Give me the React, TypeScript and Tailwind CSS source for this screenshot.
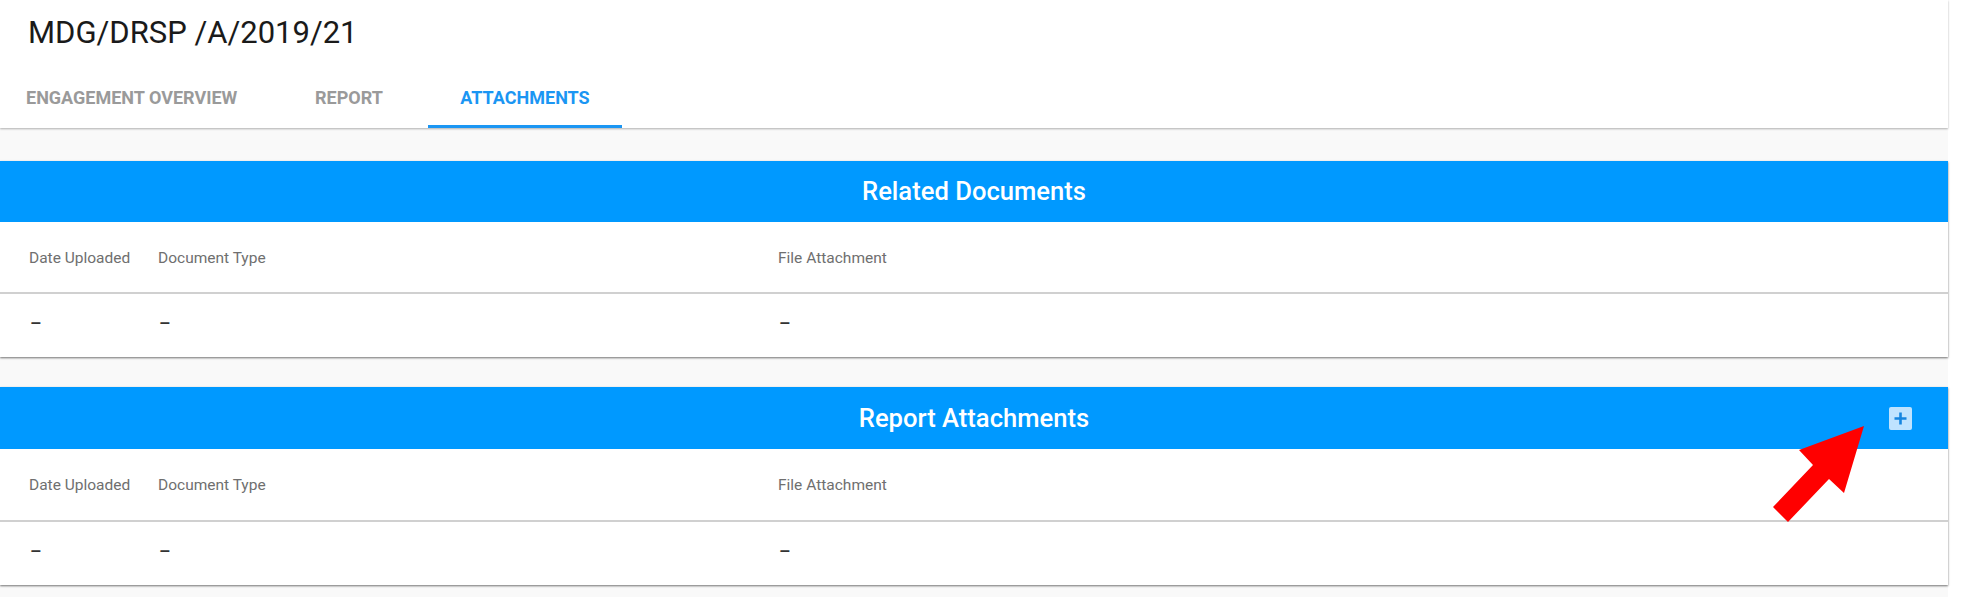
const rowFont = { fontFamily: "Roboto, 'Liberation Sans', sans-serif" };

function Section({ title, add, barH, headH, bodyH }: { title: string; add?: boolean; barH: string; headH: string; bodyH: string }) {
  return (
    <section className="bg-white shadow-[0_1px_2px_rgba(0,0,0,0.55)]">
      <div className={`relative flex items-center justify-center bg-[#0099ff] text-[25.6px] font-medium text-white ${barH}`}>
        {title}
        {add && (
          <button className="absolute right-[36px] top-[20px] flex h-[23px] w-[23px] items-center justify-center rounded-[2px] bg-[#bfe3ff]">
            <svg width="15" height="15" viewBox="0 0 15 15">
              <path d="M7.5 1.5v12M1.5 7.5h12" stroke="#1585e0" strokeWidth="2.6" />
            </svg>
          </button>
        )}
      </div>
      <div className={`grid grid-cols-[129px_620px_1fr] items-center border-b-2 border-[#d0d0d0] pl-[29px] pt-[3px] text-[15.5px] text-[#6f6f6f] ${headH}`}>
        <span>Date Uploaded</span>
        <span>Document Type</span>
        <span>File Attachment</span>
      </div>
      <div className={`grid grid-cols-[129px_620px_1fr] items-center pb-[4px] pl-[30px] text-[18px] font-medium text-[#333333] ${bodyH}`}>
        <span>–</span>
        <span>–</span>
        <span>–</span>
      </div>
    </section>
  );
}

export default function App() {
  return (
    <div className="h-[597px] w-[1970px] overflow-hidden bg-white" style={rowFont}>
      <div className="w-[1948px]">
        <header className="relative z-10 h-[128px] bg-white shadow-[0_1px_2px_rgba(0,0,0,0.3)]">
          <h1 className="pl-[28px] pt-[15px] text-[31px] font-normal leading-[36px] text-[#1a1a1a]">MDG/DRSP /A/2019/21</h1>
          <nav className="mt-[20px] flex h-[57px] text-[18px] font-bold">
            <div className="flex w-[282px] items-center pb-[4px] pl-[26px] text-[#9a9a9a]">ENGAGEMENT OVERVIEW</div>
            <div className="flex w-[146px] items-center pb-[4px] pl-[33px] text-[#9a9a9a]">REPORT</div>
            <div className="flex w-[194px] items-center justify-center border-b-[3px] border-[#1b96f3] pb-[1px] text-[#1b96f3]">ATTACHMENTS</div>
          </nav>
        </header>
        <main className="flex h-[469px] flex-col gap-[30px] bg-[#f9f9f9] pt-[33px]">
          <Section title="Related Documents" barH="h-[61px]" headH="h-[72px]" bodyH="h-[63px]" />
          <Section title="Report Attachments" add barH="h-[62px]" headH="h-[73px]" bodyH="h-[63px]" />
        </main>
      </div>
      <svg className="absolute left-0 top-0" width="1970" height="597" style={{ pointerEvents: "none" }}>
        <polygon points="1864,426 1844,493 1829,479 1788,522 1773,507 1813,465 1799,450" fill="#ff0000" />
      </svg>
    </div>
  );
}
